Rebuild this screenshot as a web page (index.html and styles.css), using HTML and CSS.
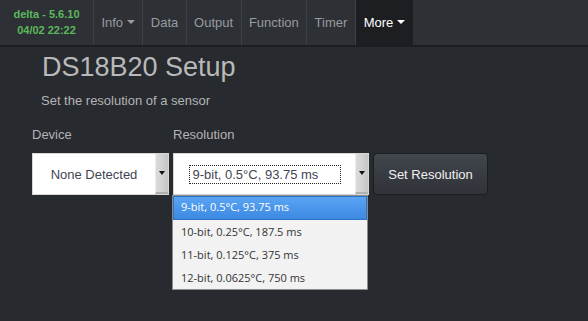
FILE: index.html
```html
<!DOCTYPE html>
<html>
<head>
<meta charset="utf-8">
<link rel="stylesheet" href="styles.css">
</head>
<body>
<nav class="navbar">
  <div class="brand"><span>delta - 5.6.10</span><span>04/02 22:22</span></div>
  <ul class="nav">
    <li class="nav-item">Info<span class="caret"></span></li>
    <li class="nav-item">Data</li>
    <li class="nav-item">Output</li>
    <li class="nav-item">Function</li>
    <li class="nav-item">Timer</li>
    <li class="nav-item active">More<span class="caret"></span></li>
  </ul>
</nav>
<main class="page">
  <h1 class="title">DS18B20 Setup</h1>
  <p class="lead">Set the resolution of a sensor</p>
  <div class="form-row">
    <div class="field">
      <label class="label">Device</label>
      <div class="select device">
        <div class="select-value centered">None Detected</div>
        <div class="select-arrow"><span class="tri"></span></div>
      </div>
    </div>
    <div class="field">
      <label class="label">Resolution</label>
      <div class="select resolution">
        <div class="select-value"><span class="focus-box">9-bit, 0.5°C, 93.75 ms</span></div>
        <div class="select-arrow"><span class="tri"></span></div>
        <ul class="dropdown">
          <li class="option selected">9-bit, 0.5°C, 93.75 ms</li>
          <li class="option">10-bit, 0.25°C, 187.5 ms</li>
          <li class="option">11-bit, 0.125°C, 375 ms</li>
          <li class="option">12-bit, 0.0625°C, 750 ms</li>
        </ul>
      </div>
    </div>
    <button class="btn">Set Resolution</button>
  </div>
</main>
</body>
</html>
```
FILE: styles.css
```css
html, body {
  margin: 0;
  padding: 0;
}
body {
  background: #272a2f;
  font-family: "Liberation Sans", Arial, sans-serif;
  color: #b4b4b4;
  height: 321px;
  overflow: hidden;
}
.navbar {
  display: flex;
  height: 45px;
  background: #2d3035;
  border-bottom: 2px solid #1b1d20;
}
.brand {
  width: 94px;
  border-right: 1px solid #3d4147;
  display: flex;
  flex-direction: column;
  align-items: center;
  justify-content: center;
  color: #5cb85c;
  font-weight: bold;
  font-size: 11px;
  line-height: 16px;
  padding-bottom: 1px;
  box-sizing: border-box;
}
.nav {
  list-style: none;
  margin: 0;
  padding: 0;
  display: flex;
}
.nav-item {
  display: flex;
  align-items: center;
  padding: 0 7.4px 1px;
  border-right: 1px solid #3d4147;
  color: #989ba0;
  font-size: 13px;
}
.nav-item.active {
  background: #1c1e22;
  color: #ffffff;
  border-right: none;
  padding: 0 8px 1px;
}
.caret {
  display: inline-block;
  width: 0;
  height: 0;
  margin-left: 4px;
  border-top: 4px solid currentColor;
  border-left: 4px solid transparent;
  border-right: 4px solid transparent;
}
.page {
  padding: 0 32px;
}
.title {
  margin: 5px 0 0 10px;
  font-size: 27px;
  line-height: 30px;
  font-weight: normal;
  color: #b9b9b9;
}
.lead {
  margin: 10px 0 0 9px;
  font-size: 13px;
  line-height: 18px;
  color: #b4b4b4;
}
.form-row {
  display: flex;
  align-items: flex-end;
  gap: 4px;
  margin-top: 16px;
}
.field {
  display: flex;
  flex-direction: column;
}
.label {
  font-size: 13px;
  line-height: 18px;
  margin-bottom: 9px;
  color: #b4b4b4;
}
.select {
  position: relative;
  display: flex;
  height: 42px;
  background: #ffffff;
  border: 1px solid #d6d6d6;
  box-sizing: border-box;
}
.select.device {
  width: 137px;
}
.select.resolution {
  width: 196px;
}
.select-value {
  flex: 1;
  display: flex;
  align-items: center;
  font-size: 13px;
  color: #3f4653;
}
.select-value.centered {
  justify-content: center;
}
.resolution .select-value {
  justify-content: center;
}
.focus-box {
  width: 147px;
  height: 17px;
  line-height: 17px;
  padding-left: 3px;
  outline: 1px dotted #222;
  outline-offset: 0;
  border: 0;
}
.select-arrow {
  width: 13px;
  background: linear-gradient(to right, #dcdcdc, #c6c6c6);
  border-left: 1px solid #eaeaea;
  border-bottom: 2px solid #b0b0b0;
  display: flex;
  align-items: center;
  justify-content: center;
  box-sizing: border-box;
}
.tri {
  width: 0;
  height: 0;
  border-top: 4px solid #111;
  border-left: 3px solid transparent;
  border-right: 3px solid transparent;
}
.dropdown {
  position: absolute;
  left: -2px;
  top: 41px;
  width: 196px;
  margin: 0;
  padding: 0;
  list-style: none;
  background: #f2f2f2;
  border: 1px solid #8c8c8c;
  box-sizing: border-box;
  font-family: "Open Sans", "Noto Sans", sans-serif;
  font-size: 11px;
  color: #333;
}
.option {
  height: 23px;
  line-height: 23px;
  padding-left: 8px;
}
.option.selected {
  height: 22px;
  line-height: 20px;
  background: linear-gradient(#5aa4f4, #3c89e2);
  border: 1px solid #2f72c4;
  color: #ffffff;
  padding-left: 7px;
}
.btn {
  height: 42px;
  width: 115px;
  box-sizing: border-box;
  background: linear-gradient(#42474d, #363a40 60%, #303439);
  border: 1px solid #1b1d20;
  border-radius: 4px;
  color: #f0f0f0;
  font-family: "Liberation Sans", Arial, sans-serif;
  font-size: 13px;
  padding: 0;
}
```
